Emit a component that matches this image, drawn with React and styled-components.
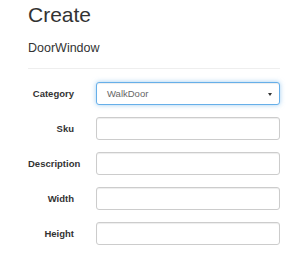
import React from 'react';
import styled, { createGlobalStyle } from 'styled-components';

const GlobalStyle = createGlobalStyle`
  html, body {
    margin: 0;
    padding: 0;
    background: #fff;
  }
  body {
    font-family: "Liberation Sans", Arial, Helvetica, sans-serif;
    color: #333;
  }
`;

const Page = styled.div`
  width: 300px;
  box-sizing: border-box;
  padding: 4px 20px 0 28px;
`;

const Title = styled.h2`
  margin: 0;
  font-size: 21px;
  font-weight: 500;
  line-height: 22px;
  color: #333;
`;

const SubTitle = styled.h4`
  margin: 15px 0 0;
  font-size: 12.5px;
  font-weight: 500;
  line-height: 14px;
  color: #333;
`;

const Rule = styled.hr`
  margin: 13px 0 0;
  border: 0;
  border-top: 1px solid #eee;
`;

const Form = styled.form`
  margin-top: 13px;
  display: flex;
  flex-direction: column;
  gap: 11.6px;
`;

const Row = styled.div`
  display: grid;
  grid-template-columns: 46px 1fr;
  column-gap: 22px;
  align-items: center;
`;

const Label = styled.label`
  text-align: right;
  font-size: 9.5px;
  font-weight: bold;
  color: #333;
  white-space: nowrap;
`;

const Input = styled.input`
  box-sizing: border-box;
  width: 100%;
  height: 23.4px;
  margin: 0;
  padding: 0 8px;
  font-family: inherit;
  font-size: 9.5px;
  color: #555;
  background: #fff;
  border: 1px solid #ccc;
  border-radius: 3px;
  box-shadow: inset 0 1px 1px rgba(0, 0, 0, 0.075);
  outline: none;
`;

const SelectBox = styled.div`
  box-sizing: border-box;
  height: 23.4px;
  padding: 0 7px 0 10px;
  display: flex;
  align-items: center;
  justify-content: space-between;
  font-size: 9.5px;
  color: #666;
  background: #fff;
  border: 1px solid #66afe9;
  border-radius: 3px;
  box-shadow: inset 0 1px 1px rgba(0, 0, 0, 0.075), 0 0 5px rgba(102, 175, 233, 0.6);
`;

const Caret = styled.span`
  width: 0;
  height: 0;
  border-left: 2.5px solid transparent;
  border-right: 2.5px solid transparent;
  border-top: 3.5px solid #333;
  margin-top: 1px;
`;

const fields = ['Sku', 'Description', 'Width', 'Height'];

export default function App() {
  return (
    <Page>
      <GlobalStyle />
      <Title>Create</Title>
      <SubTitle>DoorWindow</SubTitle>
      <Rule />
      <Form>
        <Row>
          <Label>Category</Label>
          <SelectBox>
            <span>WalkDoor</span>
            <Caret />
          </SelectBox>
        </Row>
        {fields.map((f) => (
          <Row key={f}>
            <Label>{f}</Label>
            <Input type="text" />
          </Row>
        ))}
      </Form>
    </Page>
  );
}
